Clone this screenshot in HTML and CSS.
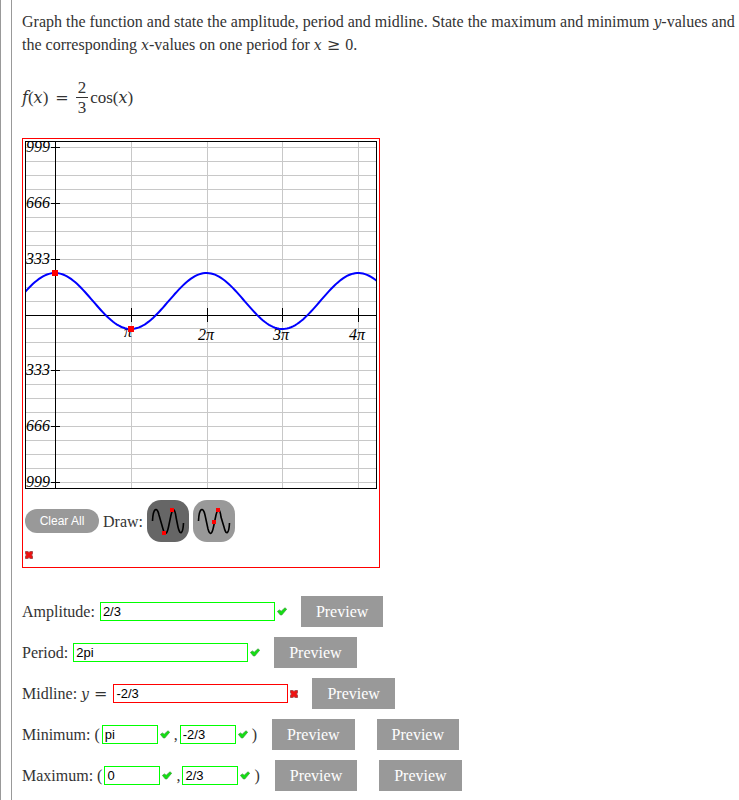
FILE: index.html
```
<!DOCTYPE html>
<html lang="en">
<head>
  <meta charset="UTF-8" />
  <meta name="viewport" content="width=device-width, initial-scale=1.0" />
  <title>Graph the function</title>
  <link rel="stylesheet" href="styles.css">
</head>
<body>
  <!-- Shared icons -->
  <svg class="defs" width="0" height="0" aria-hidden="true">
    <symbol id="check" viewBox="0 0 10 9">
      <path d="M0.4 4.4 L2.4 2.9 L4.2 4.2 L8 0.8 L9.7 2.2 L4.8 8 L3.4 8 Z" fill="#12e012" stroke="#3f9a3f" stroke-width="0.7" />
    </symbol>
    <symbol id="cross" viewBox="0 0 8 8">
      <path d="M0.5 0.5 H2.8 L4 1.4 L5.2 0.5 H7.5 V2.8 L6.6 4 L7.5 5.2 V7.5 H5.2 L4 6.6 L2.8 7.5 H0.5 V5.2 L1.4 4 L0.5 2.8 Z" fill="#ee1111" stroke="#963c3c" stroke-width="0.8" />
    </symbol>
  </svg>

  <div class="outer">
    <main class="question">
      <p class="prompt">Graph the function and state the amplitude, period and midline. State the maximum and minimum <i>y</i>-values and the corresponding <i>x</i>-values on one period for <i>x</i> <span class="op">≥</span> 0.</p>

      <div class="equation">
        <span><i>f</i>(<i>x</i>)</span>
        <span class="op">=</span>
        <span class="frac"><span class="num">2</span><span>3</span></span>
        <span>cos(<i>x</i>)</span>
      </div>

      <div class="graph-box">
        <svg class="graph" width="352" height="348" viewBox="0 0 352 348" role="img" aria-label="Graph of a cosine curve">
          <path class="grid" d="M0 20.5H352M0 34.5H352M0 48.5H352M0 62.5H352M0 76.5H352M0 90.5H352M0 104.5H352M0 118.5H352M0 132.5H352M0 146.5H352M0 160.5H352M0 6.5H352
            M0 187.5H352M0 201.5H352M0 215.5H352M0 229.5H352M0 243.5H352M0 257.5H352M0 271.5H352M0 285.5H352M0 299.5H352M0 313.5H352M0 327.5H352M0 341.5H352
            M106.5 0V348M182.5 0V348M257.5 0V348M333.5 0V348" />
          <path class="axis" d="M0 174.5H352M30.5 0V348
            M26 6.5H35M26 62.5H35M26 118.5H35M26 229.5H35M26 285.5H35M26 341.5H35
            M106.5 167V181M182.5 167V181M257.5 167V181M333.5 167V181" />
          <g class="labels">
            <text x="1" y="11">999</text>
            <text x="1" y="67">666</text>
            <text x="1" y="123">333</text>
            <text x="1" y="234">333</text>
            <text x="1" y="290">666</text>
            <text x="1" y="346">999</text>
            <text x="99" y="196">π</text>
            <text x="173" y="199">2π</text>
            <text x="248" y="199">3π</text>
            <text x="324" y="199">4π</text>
          </g>
          <path id="curve" class="curve" />
          <rect class="point" x="27" y="129" width="6" height="6" />
          <rect class="point" x="103" y="185" width="6" height="6" />
          <rect class="axis" x="0.5" y="0.5" width="351" height="347" />
        </svg>

        <div class="tools">
          <button type="button" class="clear">Clear All</button>
          <span>Draw:</span>
          <button type="button" class="tool active" aria-label="Cosine tool">
            <svg width="42" height="42" viewBox="0 0 42 42">
              <path class="wave" d="M5.5 21 C6 8 10 6 12 15 L16 29 C18 36 20 34 21.5 27 L24 15 C26 7 28 9 29 17 L31 27 C33 36 36 34 36.5 23" />
              <path class="point" d="M15 31h4v4h-4zM23 8h4v4h-4z" />
            </svg>
          </button>
          <button type="button" class="tool" aria-label="Sine tool">
            <svg width="42" height="42" viewBox="0 0 42 42">
              <path class="wave" d="M5.5 21 C6 8 10 6 12 15 L15 29 C17 36 19 34 20.5 27 L23 15 C25 7 27 9 28 17 L31 27 C33 36 36 34 36.5 23" />
              <path class="point" d="M19 20h4v4h-4zM23 8h4v4h-4z" />
            </svg>
          </button>
        </div>
        <svg class="cross" width="8" height="8"><use href="#cross" /></svg>
      </div>

      <div class="row">
        <label for="amplitude">Amplitude:</label>
        <input id="amplitude" class="right" type="text" value="2/3">
        <svg class="mark" width="10" height="9"><use href="#check" /></svg>
        <button type="button" class="preview">Preview</button>
      </div>
      <div class="row">
        <label for="period">Period:</label>
        <input id="period" class="right" type="text" value="2pi">
        <svg class="mark" width="10" height="9"><use href="#check" /></svg>
        <button type="button" class="preview">Preview</button>
      </div>
      <div class="row">
        <label for="midline">Midline: <i>y</i> <span class="op">=</span></label>
        <input id="midline" class="wrong" type="text" value="-2/3">
        <svg class="mark" width="8" height="8"><use href="#cross" /></svg>
        <button type="button" class="preview">Preview</button>
      </div>
      <div class="row pair">
        <label for="min-x">Minimum: (</label>
        <input id="min-x" class="right" type="text" value="pi">
        <svg class="mark" width="10" height="9"><use href="#check" /></svg>
        <span class="comma">,</span>
        <input class="right" type="text" value="-2/3" aria-label="Minimum y">
        <svg class="mark" width="10" height="9"><use href="#check" /></svg>
        <span class="close">)</span>
        <button type="button" class="preview">Preview</button>
        <button type="button" class="preview">Preview</button>
      </div>
      <div class="row pair">
        <label for="max-x">Maximum: (</label>
        <input id="max-x" class="right" type="text" value="0">
        <svg class="mark" width="10" height="9"><use href="#check" /></svg>
        <span class="comma">,</span>
        <input class="right" type="text" value="2/3" aria-label="Maximum y">
        <svg class="mark" width="10" height="9"><use href="#check" /></svg>
        <span class="close">)</span>
        <button type="button" class="preview">Preview</button>
        <button type="button" class="preview">Preview</button>
      </div>
    </main>
  </div>
  <script>
    // Plot the cosine curve from the two chosen points.
    const high = { x: 30, y: 132 };
    const low = { x: 106, y: 188 };
    const mid = (high.y + low.y) / 2;
    const amp = (low.y - high.y) / 2;
    let d = '';
    for (let x = 0; x <= 352; x += 2) {
      const y = mid - amp * Math.cos((x - high.x) * Math.PI / 75.8);
      d += (x === 0 ? 'M' : 'L') + x + ' ' + y.toFixed(2);
    }
    document.getElementById('curve').setAttribute('d', d);
  </script>
</body>
</html>
```
FILE: styles.css
```
/* Global Styles */
* {
  box-sizing: border-box;
}
body {
  background-color: #fff;
  color: #333;
  font-family: "Liberation Serif", "Times New Roman", serif;
  font-size: 16px;
  line-height: 23px;
  margin: 0;
}
.defs {
  display: block;
}
.outer {
  border-left: 1px solid #999;
  padding-left: 10px;
}
.question {
  border-left: 1px solid #999;
  padding: 10px 0 8px 10px;
  min-height: 100vh;
}
.prompt {
  margin: 0;
}
i {
  font-family: "DejaVu Serif", serif;
  font-size: 14px;
  line-height: 1;
}
.op {
  font-family: "DejaVu Serif", serif;
  font-size: 16px;
  line-height: 1;
  margin: 0 1px;
}

/* Function */
.equation {
  display: flex;
  align-items: center;
  gap: 6px;
  height: 39px;
  margin: 22px 0 21px;
  font-size: 17px;
}
.equation i {
  font-size: 16px;
}
.frac {
  display: flex;
  flex-direction: column;
  line-height: 19px;
  text-align: center;
}
.num {
  border-bottom: 1px solid #333;
  padding: 0 2px;
}
.frac + span {
  margin-left: -4px;
}

/* Graph */
.graph-box {
  width: 358px;
  border: 1px solid #f00;
  padding: 2px 2px 8px;
}
.graph {
  display: block;
}
.grid {
  stroke: #c8c8c8;
}
.axis {
  fill: none;
  stroke: #000;
}
.labels {
  fill: #000;
  font-size: 16px;
  font-style: italic;
}
.curve {
  fill: none;
  stroke: #00f;
  stroke-width: 2;
}
.point {
  fill: #f00;
}
.tools {
  display: flex;
  align-items: center;
  gap: 4px;
  padding: 11px 0 9px;
}
.clear {
  width: 74px;
  height: 24px;
  padding: 0;
  border: none;
  border-radius: 12px;
  background-color: #999;
  color: #fff;
  font-family: "Liberation Sans", Arial, sans-serif;
  font-size: 12px;
}
.tool {
  width: 42px;
  height: 42px;
  padding: 0;
  border: none;
  border-radius: 14px;
  background-color: #999;
}
.tool.active {
  background-color: #666;
}
.tool svg {
  display: block;
}
.wave {
  fill: none;
  stroke: #000;
  stroke-width: 1.6;
}
.cross {
  display: block;
}

/* Answers */
.row {
  display: flex;
  align-items: center;
  margin-bottom: 10px;
}
.graph-box + .row {
  margin-top: 28px;
}
.row label {
  margin-right: 5px;
}
.row input {
  width: 175px;
  height: 19px;
  padding: 0 2px;
  border: 1px solid #0f0;
  background-color: #fff;
  color: #000;
  font-family: "Liberation Sans", Arial, sans-serif;
  font-size: 13px;
}
.row input.wrong {
  border-color: #f00;
}
.mark {
  margin: 0 14px 0 2px;
}
.preview {
  height: 31px;
  padding: 0 15px;
  border: none;
  background-color: #999;
  color: #fff;
  font-family: inherit;
  font-size: 16px;
}
.preview + .preview {
  margin-left: 22px;
}
.pair label {
  margin-right: 2px;
}
.pair input {
  width: 56px;
}
.pair .mark {
  margin-right: 4px;
}
.comma {
  margin-right: 2px;
}
.close {
  margin-right: 15px;
}
```
